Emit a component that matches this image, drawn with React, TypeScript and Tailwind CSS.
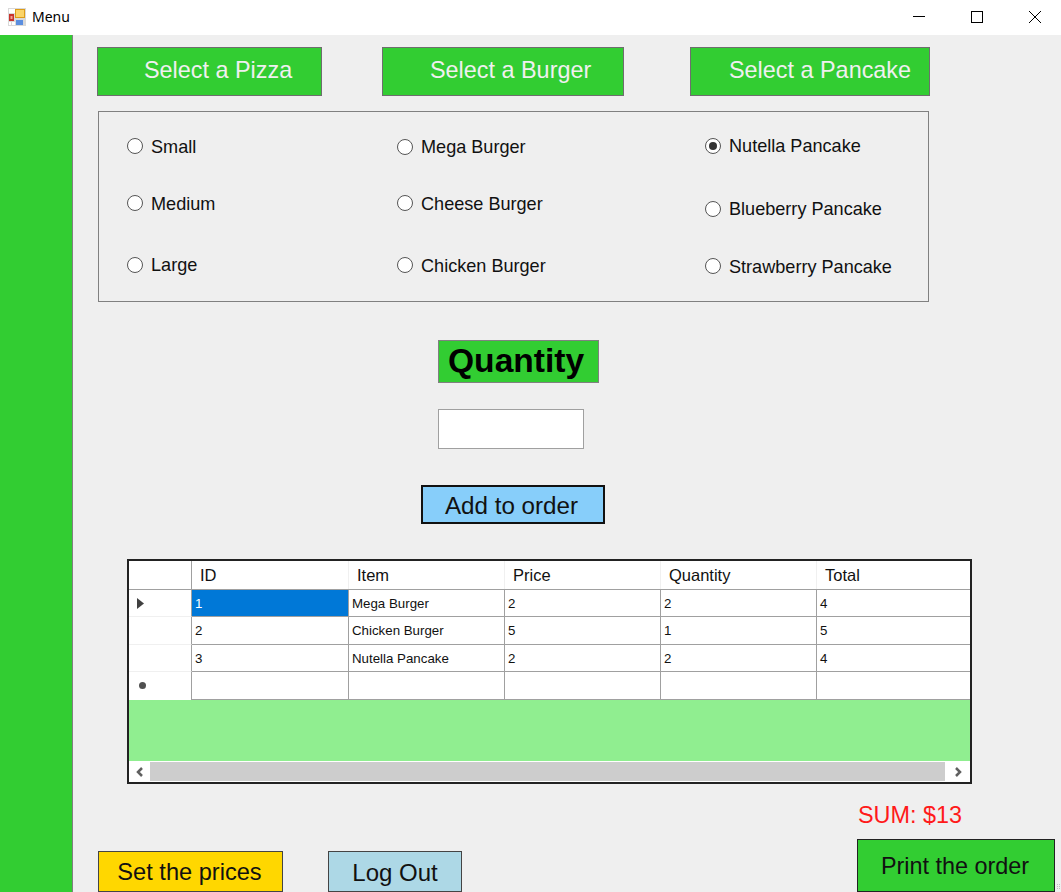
const rows = [
  { id: "1", item: "Mega Burger", price: "2", qty: "2", total: "4" },
  { id: "2", item: "Chicken Burger", price: "5", qty: "1", total: "5" },
  { id: "3", item: "Nutella Pancake", price: "2", qty: "2", total: "4" },
];

const columns = [
  { name: "ID", width: "w-[157px]" },
  { name: "Item", width: "w-[156px]" },
  { name: "Price", width: "w-[156px]" },
  { name: "Quantity", width: "w-[156px]" },
  { name: "Total", width: "flex-1" },
];

function AppIcon() {
  return (
    <svg width="18" height="18" viewBox="0 0 18 18">
      <rect width="18" height="18" fill="#d9d9d9" />
      <rect x="1" y="1" width="6" height="4" fill="#fff" />
      <rect x="1" y="6" width="5" height="7" fill="#c8322c" />
      <rect x="2.5" y="8" width="2" height="3" fill="#f0a090" />
      <rect x="7" y="1" width="10" height="9" fill="#dd9c18" />
      <rect x="8" y="2" width="8" height="7" fill="#fbd468" />
      <rect x="8" y="12" width="7" height="5" fill="#5a8ee0" />
      <rect x="1" y="14" width="2" height="3" fill="#fff" />
      <rect x="4" y="14" width="3" height="3" fill="#fff" />
    </svg>
  );
}

function TitleBar() {
  return (
    <div className="h-[35px] bg-white flex items-center pl-[8px] pb-[2px] shrink-0">
      <AppIcon />
      <span className="ml-[6px] text-[14px] text-black font-['Noto_Sans',sans-serif]">Menu</span>
      <div className="ml-auto flex items-center">
        <svg width="130" height="16" viewBox="0 0 130 16" fill="none" stroke="#000" strokeWidth="1">
          <path d="M0 7.5H12" />
          <rect x="58.5" y="2.5" width="11" height="11" />
          <path d="M116 2L128 14M128 2L116 14" />
        </svg>
        <div className="w-[18px]" />
      </div>
    </div>
  );
}

function Radio({
  label,
  checked,
  low,
  className,
}: {
  label: string;
  checked?: boolean;
  low?: boolean;
  className?: string;
}) {
  return (
    <label className={`flex items-center h-[20px] ${className ?? ""}`}>
      <span className="w-[16px] h-[16px] rounded-full border border-[#555] bg-white flex items-center justify-center shrink-0">
        {checked && <span className="w-[8px] h-[8px] rounded-full bg-[#333]" />}
      </span>
      <span className={`ml-[8px] text-[18.1px] leading-[20px] text-[#111] whitespace-nowrap ${low ? "pt-[2px]" : ""}`}>
        {label}
      </span>
    </label>
  );
}

function Chevron({ dir }: { dir: "left" | "right" }) {
  return (
    <svg width="8" height="10" viewBox="0 0 8 10" fill="none" stroke="#606060" strokeWidth="2.5">
      <path d={dir === "left" ? "M6 1L2 5L6 9" : "M2 1L6 5L2 9"} />
    </svg>
  );
}

function OrdersGrid() {
  return (
    <div className="ml-[30px] mt-[35px] w-[845px] h-[225px] border-2 border-[#222] bg-[#90ee90] flex flex-col">
      <div className="h-[29px] flex bg-white border-b border-[#a0a0a0] shrink-0">
        <div className="w-[63px] border-r border-[#a0a0a0]" />
        {columns.map((c) => (
          <div
            key={c.name}
            className={`${c.width} border-r border-[#f0f0f0] last:border-r-0 pl-[8px] text-[16.5px] leading-[28px] text-[#111]`}
          >
            {c.name}
          </div>
        ))}
      </div>
      {rows.map((r, i) => (
        <div key={r.id} className="h-[27.4px] flex shrink-0">
          <div className="w-[63px] bg-white border-r border-b border-r-[#a0a0a0] border-b-[#f0f0f0] flex items-center pl-[8px]">
            {i === 0 && (
              <svg width="7" height="11" viewBox="0 0 7 11">
                <path d="M0 0L7 5.5L0 11Z" fill="#404040" />
              </svg>
            )}
          </div>
          {[r.id, r.item, r.price, r.qty, r.total].map((v, j) => (
            <div
              key={j}
              className={`${columns[j].width} border-r border-b border-[#a0a0a0] last:border-r-0 pl-[3px] text-[13.3px] leading-[28px] ${
                i === 0 && j === 0 ? "bg-[#0078d7] text-white" : "bg-white text-[#111]"
              }`}
            >
              {v}
            </div>
          ))}
        </div>
      ))}
      <div className="h-[27.4px] flex shrink-0">
        <div className="w-[63px] bg-white border-r border-[#a0a0a0] flex items-center pl-[10px]">
          <span className="w-[7px] h-[7px] rounded-full bg-[#505050]" />
        </div>
        {columns.map((c) => (
          <div key={c.name} className={`${c.width} bg-white border-r border-b border-[#a0a0a0] last:border-r-0`} />
        ))}
      </div>
      <div className="flex-1" />
      <div className="h-[21px] bg-white flex items-center shrink-0">
        <div className="w-[21px] flex justify-center">
          <Chevron dir="left" />
        </div>
        <div className="flex-1 h-[19px] bg-[#cdcdcd]" />
        <div className="w-[25px] flex justify-center">
          <Chevron dir="right" />
        </div>
      </div>
    </div>
  );
}

export default function App() {
  return (
    <div className="relative h-[892px] overflow-hidden flex flex-col bg-[#efefef] [font-family:'Liberation_Sans',Arial,sans-serif]">
      <TitleBar />
      <div className="flex flex-1 overflow-hidden">
        <div className="w-[73px] bg-[#32cd32] border-r border-[#808080] shrink-0" />
        <main className="flex-1 pl-[24px] pt-[12px] flex flex-col">
          <div className="flex">
            <button className="w-[225px] h-[49px] pb-[2px] bg-[#32cd32] border border-[#6e6e6e] text-[23.4px] text-[#f0f0f0] pl-[46px] text-left">
              Select a Pizza
            </button>
            <button className="ml-[60px] w-[242px] h-[49px] pb-[2px] bg-[#32cd32] border border-[#6e6e6e] text-[23.4px] text-[#f0f0f0] pl-[47px] text-left">
              Select a Burger
            </button>
            <button className="ml-[66px] w-[240px] h-[49px] pb-[2px] bg-[#32cd32] border border-[#6e6e6e] text-[23.4px] text-[#f0f0f0] pl-[38px] text-left">
              Select a Pancake
            </button>
          </div>

          <div className="ml-[1px] mt-[15px] w-[831px] h-[191px] border border-[#808080] flex">
            <div className="w-[270px] pl-[28px] pt-[24px] flex flex-col shrink-0">
              <Radio label="Small" low />
              <Radio label="Medium" low className="mt-[37px]" />
              <Radio label="Large" className="mt-[42px]" />
            </div>
            <div className="w-[308px] pl-[28px] pt-[25px] flex flex-col shrink-0">
              <Radio label="Mega Burger" />
              <Radio label="Cheese Burger" low className="mt-[36px]" />
              <Radio label="Chicken Burger" low className="mt-[42px]" />
            </div>
            <div className="pl-[28px] pt-[24px] flex flex-col">
              <Radio label="Nutella Pancake" checked />
              <Radio label="Blueberry Pancake" className="mt-[43px]" />
              <Radio label="Strawberry Pancake" low className="mt-[37px]" />
            </div>
          </div>

          <div className="ml-[341px] mt-[38px] w-[161px] h-[43px] bg-[#32cd32] border border-[#808080] text-[33.6px] font-bold text-black leading-[39px] pl-[9px]">
            Quantity
          </div>
          <input className="ml-[341px] mt-[26px] w-[146px] h-[40px] bg-white border border-[#a0a0a0] outline-none" />
          <button className="ml-[324px] mt-[36px] w-[184px] h-[39px] pr-[3px] pt-[1px] bg-[#87cefa] border-2 border-[#111] text-[24.2px] text-[#111]">
            Add to order
          </button>

          <OrdersGrid />

          <div className="ml-[761px] mt-[18px] h-[26px] text-[23.4px] leading-[26px] text-[#ff1a1a]">SUM: $13</div>

          <div className="mt-[11px] flex items-end flex-1">
            <button className="ml-[1px] w-[185px] h-[41px] pr-[2px] pt-[2px] bg-[#ffd700] border border-[#444] text-[23.6px] text-[#111]">
              Set the prices
            </button>
            <button className="ml-[45px] w-[134px] h-[41px] pt-[2px] bg-[#add8e6] border border-[#444] text-[24px] text-[#111]">
              Log Out
            </button>
            <button className="ml-[395px] w-[198px] h-[53px] pt-[2px] pr-[2px] bg-[#32cd32] border border-[#222] text-[23.4px] text-[#111]">
              Print the order
            </button>
          </div>
        </main>
      </div>
      <svg className="absolute right-0 bottom-0" width="6" height="8" viewBox="0 0 6 8" fill="#c0c0c0">
        <rect x="2" y="0" width="1" height="1" />
        <rect x="4" y="0" width="1" height="1" />
        <rect x="2" y="2" width="1" height="1" />
        <rect x="4" y="2" width="1" height="1" />
        <rect x="2" y="4" width="1" height="1" />
        <rect x="4" y="4" width="1" height="1" />
      </svg>
    </div>
  );
}
